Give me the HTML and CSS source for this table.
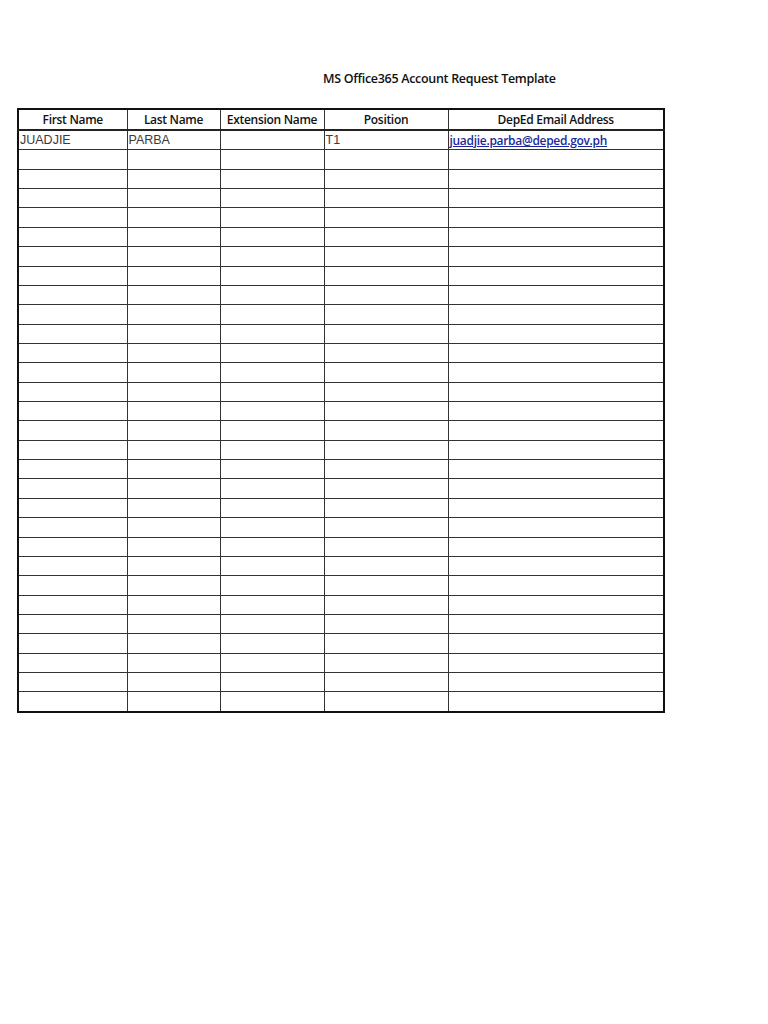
FILE: index.html
```html
<!DOCTYPE html>
<html>
<head>
<meta charset="utf-8">
<link rel="stylesheet" href="styles.css">
</head>
<body>
<div class="page">
  <h1 class="title">MS Office365 Account Request Template</h1>
  <table class="sheet">
    <colgroup>
      <col class="c1"><col class="c2"><col class="c3"><col class="c4"><col class="c5">
    </colgroup>
    <thead>
      <tr><th>First Name</th><th>Last Name</th><th>Extension Name</th><th>Position</th><th>DepEd Email Address</th></tr>
    </thead>
    <tbody>
      <tr><td class="val">JUADJIE</td><td class="val">PARBA</td><td></td><td class="val">T1</td><td><a class="mail" href="#">juadjie.parba@deped.gov.ph</a></td></tr>
      <tr><td></td><td></td><td></td><td></td><td></td></tr>
      <tr><td></td><td></td><td></td><td></td><td></td></tr>
      <tr><td></td><td></td><td></td><td></td><td></td></tr>
      <tr><td></td><td></td><td></td><td></td><td></td></tr>
      <tr><td></td><td></td><td></td><td></td><td></td></tr>
      <tr><td></td><td></td><td></td><td></td><td></td></tr>
      <tr><td></td><td></td><td></td><td></td><td></td></tr>
      <tr><td></td><td></td><td></td><td></td><td></td></tr>
      <tr><td></td><td></td><td></td><td></td><td></td></tr>
      <tr><td></td><td></td><td></td><td></td><td></td></tr>
      <tr><td></td><td></td><td></td><td></td><td></td></tr>
      <tr><td></td><td></td><td></td><td></td><td></td></tr>
      <tr><td></td><td></td><td></td><td></td><td></td></tr>
      <tr><td></td><td></td><td></td><td></td><td></td></tr>
      <tr><td></td><td></td><td></td><td></td><td></td></tr>
      <tr><td></td><td></td><td></td><td></td><td></td></tr>
      <tr><td></td><td></td><td></td><td></td><td></td></tr>
      <tr><td></td><td></td><td></td><td></td><td></td></tr>
      <tr><td></td><td></td><td></td><td></td><td></td></tr>
      <tr><td></td><td></td><td></td><td></td><td></td></tr>
      <tr><td></td><td></td><td></td><td></td><td></td></tr>
      <tr><td></td><td></td><td></td><td></td><td></td></tr>
      <tr><td></td><td></td><td></td><td></td><td></td></tr>
      <tr><td></td><td></td><td></td><td></td><td></td></tr>
      <tr><td></td><td></td><td></td><td></td><td></td></tr>
      <tr><td></td><td></td><td></td><td></td><td></td></tr>
      <tr><td></td><td></td><td></td><td></td><td></td></tr>
      <tr><td></td><td></td><td></td><td></td><td></td></tr>
      <tr><td></td><td></td><td></td><td></td><td></td></tr>
    </tbody>
  </table>
</div>
</body>
</html>
```

FILE: styles.css
```css
html, body {
  margin: 0;
  padding: 0;
  background: #fff;
}
.page {
  padding: 70px 0 0 17px;
}
.title {
  margin: 0 0 20px 306px;
  font-family: "Open Sans", "Liberation Sans", sans-serif;
  font-weight: 600;
  font-size: 12.5px;
  line-height: 18px;
  color: #111;
  letter-spacing: -0.3px;
}
.sheet {
  border-collapse: collapse;
  table-layout: fixed;
  width: 646px;
  border: 2px solid #111;
}
.c1 { width: 109px; }
.c2 { width: 93px; }
.c3 { width: 104px; }
.c4 { width: 124px; }
.c5 { width: 216px; }
.sheet th {
  height: 19px;
  padding: 0;
  border: 1px solid #333;
  border-bottom: 2px solid #222;
  font-family: "Open Sans", "Liberation Sans", sans-serif;
  font-weight: 600;
  font-size: 12px;
  letter-spacing: -0.3px;
  color: #111;
  text-align: center;
  vertical-align: middle;
}
.sheet td {
  height: 18.36px;
  padding: 0 0 0 1px;
  border: 1px solid #333;
  font-family: "Liberation Sans", Arial, sans-serif;
  font-size: 12px;
  color: #3a3a3a;
  vertical-align: middle;
  white-space: nowrap;
}
.sheet td.val {
  font-size: 12.5px;
}
.mail {
  font-family: "Open Sans", "Liberation Sans", sans-serif;
  font-weight: 600;
  font-size: 12px;
  letter-spacing: -0.3px;
  color: #1b2a9a;
  text-decoration: underline;
}
```
